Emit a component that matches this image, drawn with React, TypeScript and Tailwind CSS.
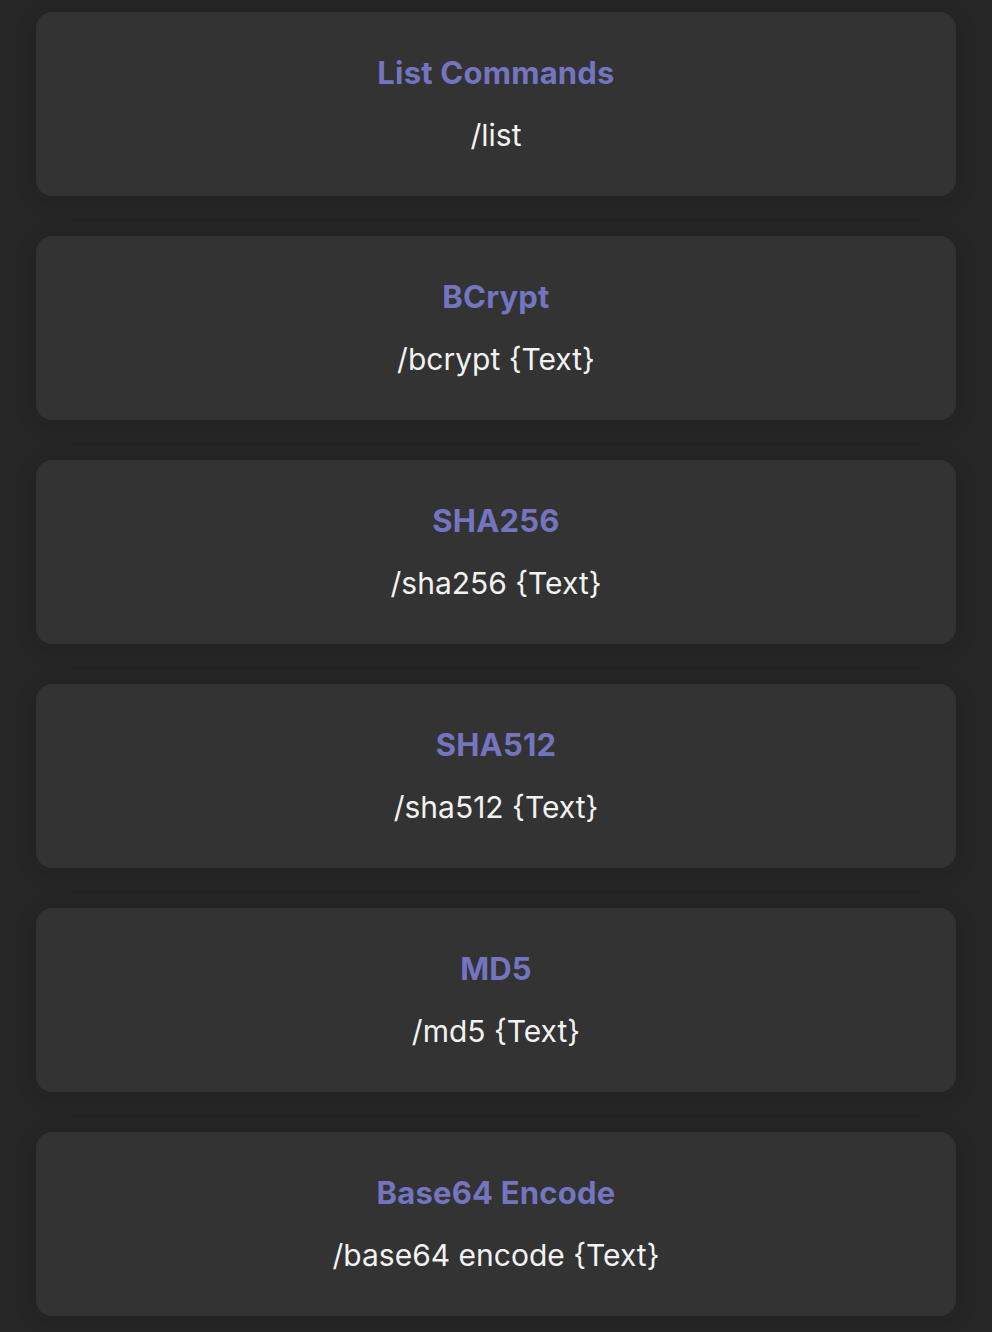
const commands = [
  { title: 'List Commands', usage: '/list' },
  { title: 'BCrypt', usage: '/bcrypt {Text}' },
  { title: 'SHA256', usage: '/sha256 {Text}' },
  { title: 'SHA512', usage: '/sha512 {Text}' },
  { title: 'MD5', usage: '/md5 {Text}' },
  { title: 'Base64 Encode', usage: '/base64 encode {Text}' },
];

export default function App() {
  return (
    <div
      className="min-h-[1332px] bg-[#262626] px-[36px] pt-[12px] pb-[16px] flex flex-col gap-[40px]"
      style={{ fontFamily: 'Inter, "Noto Sans", sans-serif' }}
    >
      {commands.map((cmd) => (
        <div
          key={cmd.title}
          className="rounded-2xl bg-[#333333] shadow-[0_4px_24px_rgba(0,0,0,0.12)] py-[44px] flex flex-col items-center gap-[28px]"
        >
          <h2 className="text-[31px] leading-[34px] font-bold tracking-[0.2px] text-[#7475c0]">{cmd.title}</h2>
          <p className="text-[30px] leading-[34px] text-[#f2f2f2]">{cmd.usage}</p>
        </div>
      ))}
    </div>
  );
}
